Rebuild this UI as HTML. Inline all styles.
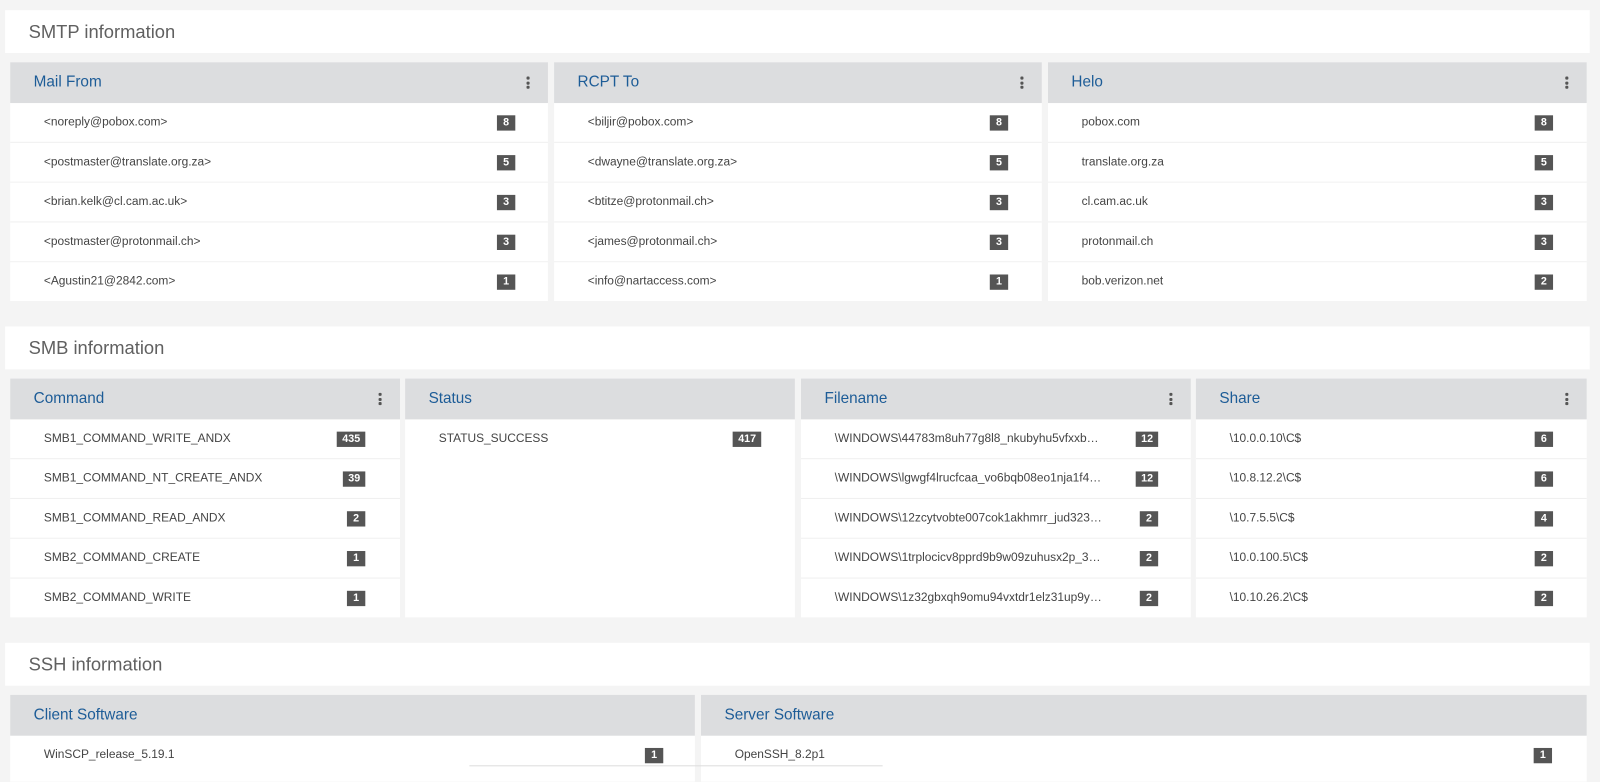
<!DOCTYPE html>
<html><head><meta charset="utf-8"><style>
*{box-sizing:border-box;margin:0;padding:0}
body{width:1600px;height:766px;overflow:hidden;background:#f4f4f4;font-family:"Liberation Sans",sans-serif;position:relative}
#w{position:absolute;left:0;top:0;width:1568px;height:751px;transform:scale(1.0204);transform-origin:0 0}
.sec{position:absolute;left:5px;width:1553px;height:42px;background:#fff;color:#606060;font-size:18px;padding-left:23px;line-height:42px;font-weight:300}
.p{position:absolute;background:#fff}
.h{height:40px;background:#dcdddf;color:#1d5c97;font-size:15px;line-height:40px;padding-left:23px;position:relative}
.dots{position:absolute;right:18px;top:14px;width:3px}
.dots i{display:block;width:3px;height:3px;background:#555;margin-bottom:1.5px;border-radius:1px}
.r{height:39px;border-bottom:1px solid #f0f0f0;font-size:11.7px;color:#444;line-height:38px;padding-left:33px;position:relative}
.r span.t{display:inline-block;white-space:nowrap;overflow:hidden;text-overflow:ellipsis;vertical-align:top}
.b{position:absolute;top:12px;height:15px;line-height:15px;background:#555;color:#fff;font-size:10.5px;font-weight:bold;padding:0 5px;min-width:18px;text-align:center}
</style></head><body><div id="w">
<div class="sec" style="top:10px">SMTP information</div>
<div class="p" style="left:10px;top:61px;width:527px;height:234px"><div class="h">Mail From<div class="dots"><i></i><i></i><i></i></div></div>
<div class="r">&lt;noreply@pobox.com&gt;<span class="b" style="right:32px">8</span></div>
<div class="r">&lt;postmaster@translate.org.za&gt;<span class="b" style="right:32px">5</span></div>
<div class="r">&lt;brian.kelk@cl.cam.ac.uk&gt;<span class="b" style="right:32px">3</span></div>
<div class="r">&lt;postmaster@protonmail.ch&gt;<span class="b" style="right:32px">3</span></div>
<div class="r" style="border:0">&lt;Agustin21@2842.com&gt;<span class="b" style="right:32px">1</span></div></div>
<div class="p" style="left:543px;top:61px;width:478px;height:234px"><div class="h">RCPT To<div class="dots"><i></i><i></i><i></i></div></div>
<div class="r">&lt;biljir@pobox.com&gt;<span class="b" style="right:33px">8</span></div>
<div class="r">&lt;dwayne@translate.org.za&gt;<span class="b" style="right:33px">5</span></div>
<div class="r">&lt;btitze@protonmail.ch&gt;<span class="b" style="right:33px">3</span></div>
<div class="r">&lt;james@protonmail.ch&gt;<span class="b" style="right:33px">3</span></div>
<div class="r" style="border:0">&lt;info@nartaccess.com&gt;<span class="b" style="right:33px">1</span></div></div>
<div class="p" style="left:1027px;top:61px;width:528px;height:234px"><div class="h">Helo<div class="dots"><i></i><i></i><i></i></div></div>
<div class="r">pobox.com<span class="b" style="right:33px">8</span></div>
<div class="r">translate.org.za<span class="b" style="right:33px">5</span></div>
<div class="r">cl.cam.ac.uk<span class="b" style="right:33px">3</span></div>
<div class="r">protonmail.ch<span class="b" style="right:33px">3</span></div>
<div class="r" style="border:0">bob.verizon.net<span class="b" style="right:33px">2</span></div></div>

<div class="sec" style="top:320px">SMB information</div>
<div class="p" style="left:10px;top:371px;width:382px;height:234px"><div class="h">Command<div class="dots"><i></i><i></i><i></i></div></div>
<div class="r">SMB1_COMMAND_WRITE_ANDX<span class="b" style="right:34px">435</span></div>
<div class="r">SMB1_COMMAND_NT_CREATE_ANDX<span class="b" style="right:34px">39</span></div>
<div class="r">SMB1_COMMAND_READ_ANDX<span class="b" style="right:34px">2</span></div>
<div class="r">SMB2_COMMAND_CREATE<span class="b" style="right:34px">1</span></div>
<div class="r" style="border:0">SMB2_COMMAND_WRITE<span class="b" style="right:34px">1</span></div></div>
<div class="p" style="left:397px;top:371px;width:382px;height:234px"><div class="h">Status</div>
<div class="r" style="border:0">STATUS_SUCCESS<span class="b" style="right:33px">417</span></div></div>
<div class="p" style="left:785px;top:371px;width:382px;height:234px"><div class="h">Filename<div class="dots"><i></i><i></i><i></i></div></div>
<div class="r"><span class="t" style="width:262px">\WINDOWS\44783m8uh77g8l8_nkubyhu5vfxxbh7a93s</span><span class="b" style="right:32px">12</span></div>
<div class="r"><span class="t" style="width:262px">\WINDOWS\lgwgf4lrucfcaa_vo6bqb08eo1nja1f4dq2</span><span class="b" style="right:32px">12</span></div>
<div class="r"><span class="t" style="width:262px">\WINDOWS\12zcytvobte007cok1akhmrr_jud3230xx</span><span class="b" style="right:32px">2</span></div>
<div class="r"><span class="t" style="width:262px">\WINDOWS\1trplocicv8pprd9b9w09zuhusx2p_3stxx</span><span class="b" style="right:32px">2</span></div>
<div class="r" style="border:0"><span class="t" style="width:262px">\WINDOWS\1z32gbxqh9omu94vxtdr1elz31up9yixxx</span><span class="b" style="right:32px">2</span></div></div>
<div class="p" style="left:1172px;top:371px;width:383px;height:234px"><div class="h">Share<div class="dots"><i></i><i></i><i></i></div></div>
<div class="r">\10.0.0.10\C$<span class="b" style="right:33px">6</span></div>
<div class="r">\10.8.12.2\C$<span class="b" style="right:33px">6</span></div>
<div class="r">\10.7.5.5\C$<span class="b" style="right:33px">4</span></div>
<div class="r">\10.0.100.5\C$<span class="b" style="right:33px">2</span></div>
<div class="r" style="border:0">\10.10.26.2\C$<span class="b" style="right:33px">2</span></div></div>

<div class="sec" style="top:630px">SSH information</div>
<div class="p" style="left:10px;top:681px;width:671px;height:85px"><div class="h">Client Software</div>
<div class="r" style="border:0">WinSCP_release_5.19.1<span class="b" style="right:31px">1</span></div></div>
<div class="p" style="left:687px;top:681px;width:868px;height:85px"><div class="h">Server Software</div>
<div class="r" style="border:0">OpenSSH_8.2p1<span class="b" style="right:34px">1</span></div></div>
<div style="position:absolute;left:460px;top:749.5px;width:405px;height:1px;background:#ddd"></div>
</div></body></html>
